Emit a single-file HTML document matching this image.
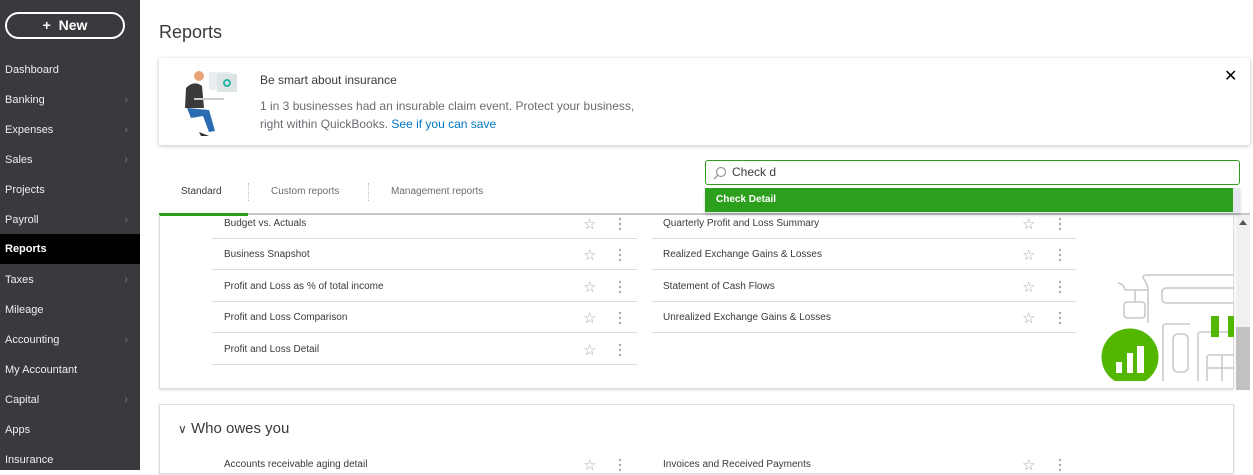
<!DOCTYPE html><html><head><style>
*{box-sizing:border-box;margin:0;padding:0}
body{width:1253px;height:470px;overflow:hidden;background:#fff;font-family:"Liberation Sans",sans-serif;position:relative}
.sb{position:absolute;left:0;top:0;width:140px;height:470px;background:#393a3d;color:#fff}
.new{position:absolute;left:5px;top:12px;width:120px;height:27px;border:2px solid #fff;border-radius:14px;font-size:14px;font-weight:bold;text-align:center;line-height:23px}
.nav{position:absolute;left:0;width:140px;height:30px;line-height:30px;font-size:11px;padding-left:5px;color:#eee}
.nav.a{background:#000;font-weight:bold;color:#fff}
.nav .c{position:absolute;right:12px;top:0;color:#777;font-size:11px}
.abs{position:absolute}
.t{font-size:10px;color:#393a3d}
.ln{position:absolute;height:1px;background:#dcdcdc}
</style></head><body>
<div class="sb">
<div class="new">+&nbsp; New</div>
<div class="nav" style="top:55px">Dashboard</div>
<div class="nav" style="top:85px">Banking<span class="c">›</span></div>
<div class="nav" style="top:115px">Expenses<span class="c">›</span></div>
<div class="nav" style="top:145px">Sales<span class="c">›</span></div>
<div class="nav" style="top:175px">Projects</div>
<div class="nav" style="top:205px">Payroll<span class="c">›</span></div>
<div class="nav a" style="top:234px">Reports</div>
<div class="nav" style="top:265px">Taxes<span class="c">›</span></div>
<div class="nav" style="top:295px">Mileage</div>
<div class="nav" style="top:325px">Accounting<span class="c">›</span></div>
<div class="nav" style="top:355px">My Accountant</div>
<div class="nav" style="top:385px">Capital<span class="c">›</span></div>
<div class="nav" style="top:415px">Apps</div>
<div class="nav" style="top:445px">Insurance</div>
</div>
<div class="abs" style="left:159px;top:22px;font-size:18px;color:#393a3d">Reports</div>
<div class="abs" style="left:159px;top:58px;width:1091px;height:87px;background:#fff;box-shadow:0 1px 4px rgba(0,0,0,.25);border-radius:2px">
<svg class="abs" style="left:10px;top:8px" width="70" height="72"><circle cx="30" cy="10" r="5" fill="#e8a57a"/><path d="M17 22 Q25 14 33 20 L35 42 L16 42 Z" fill="#3a3a3a"/><path d="M18 42 L40 44 L46 65 L40 66 L34 50 L22 52 Z" fill="#2b6cb0"/><rect x="40" y="6" width="22" height="18" fill="#e9eef0"/><rect x="48" y="8" width="20" height="18" fill="#dde4e6"/><circle cx="58" cy="17" r="3" fill="none" stroke="#2bb5a8" stroke-width="2"/><rect x="25" y="32" width="30" height="2" fill="#ccc"/><path d="M30 66 L40 70 L32 70 Z" fill="#333"/></svg>
<div class="abs" style="left:101px;top:15px;font-size:12px;color:#393a3d">Be smart about insurance</div>
<div class="abs" style="left:101px;top:39px;font-size:12px;color:#6b6c72;line-height:18px">1 in 3 businesses had an insurable claim event. Protect your business,<br>right within QuickBooks. <span style="color:#0077c5">See if you can save</span></div>
<div class="abs" style="left:1065px;top:8px;font-size:16px;color:#000">✕</div>
</div>
<div class="abs t" style="left:181px;top:186px;color:#393a3d">Standard</div>
<div class="abs" style="left:248px;top:183px;height:18px;border-left:1px dotted #bbb"></div>
<div class="abs t" style="left:271px;top:186px;color:#6b6c72">Custom reports</div>
<div class="abs" style="left:368px;top:183px;height:18px;border-left:1px dotted #bbb"></div>
<div class="abs t" style="left:391px;top:186px;color:#6b6c72">Management reports</div>
<div class="abs" style="left:159px;top:213px;width:1091px;height:2px;background:#c8c8c8"></div>
<div class="abs" style="left:159px;top:213px;width:89px;height:3px;background:#2ca01c"></div>
<div class="abs" style="left:159px;top:215px;width:1075px;height:174px;border:1px solid #ddd;border-top:none;box-shadow:0 1px 2px rgba(0,0,0,.15)"></div>
<div class="abs" style="left:1236px;top:215px;width:14px;height:175px;background:#f0f0f0"><div style="position:absolute;left:0;top:112px;width:14px;height:63px;background:#c1c1c1"></div><div style="position:absolute;left:3px;top:5px;border:4px solid transparent;border-bottom:5px solid #555;border-top:none"></div></div>
<svg class="abs" style="left:1080px;top:260px" width="154" height="121"><g fill="none" stroke="#c8c9cc" stroke-width="1.6"><path d="M154 15 L66 15 Q63 15 63 18 Q68 24 68 30 L68 63"/><path d="M38 23 Q44 24 45 30 L68 30"/><rect x="44" y="42" width="21" height="16" rx="3"/><path d="M55 30 L55 42"/><rect x="82" y="28" width="80" height="15" rx="4"/><path d="M83 121 L83 67 Q83 64 86 64 L110 64"/><rect x="93" y="74" width="15" height="38" rx="5"/><path d="M118 121 L118 75 Q118 72 121 72 L154 72 M127 121 L127 98 Q127 95 130 95 L154 95 M127 108 L154 108 M142 95 L142 121"/></g><rect x="131" y="56" width="8" height="21" fill="#53b700"/><rect x="148" y="56" width="6" height="21" fill="#53b700"/><circle cx="50" cy="97" r="28.5" fill="#53b700"/><rect x="36" y="102" width="6" height="11" fill="#fff"/><rect x="47" y="93" width="6" height="20" fill="#fff"/><rect x="57" y="86" width="7" height="27" fill="#fff"/></svg>
<div id="rows"></div>
<div class="abs" style="left:705px;top:160px;width:535px;height:25px;border:1px solid #2ca01c;border-radius:3px;background:#fff"><svg class="abs" style="left:7px;top:5px" width="14" height="14"><circle cx="8" cy="6" r="4.5" fill="none" stroke="#999" stroke-width="1.2"/><path d="M5 9 L1 13" stroke="#999" stroke-width="1.3"/></svg><span class="abs" style="left:26px;top:4px;font-size:12px;color:#393a3d">Check d</span></div>
<div class="abs" style="left:705px;top:188px;width:535px;height:25px;background:#e4e7ee;box-shadow:0 2px 3px rgba(0,0,0,.2)"><div style="width:528px;height:24px;background:#2ca01c;color:#fff;font-size:10px;font-weight:bold;padding:6px 0 0 11px">Check Detail</div></div>
<div class="abs" style="left:159px;top:404px;width:1075px;height:70px;border:1px solid #ddd;box-shadow:0 1px 2px rgba(0,0,0,.15)"></div>
<div class="abs" style="left:178px;top:420px;font-size:15px;color:#393a3d"><span style="font-size:12px">∨</span> Who owes you</div>
<script>
var L=[["Budget vs. Actuals","Quarterly Profit and Loss Summary",224],["Business Snapshot","Realized Exchange Gains & Losses",255],["Profit and Loss as % of total income","Statement of Cash Flows",287],["Profit and Loss Comparison","Unrealized Exchange Gains & Losses",318],["Profit and Loss Detail","",350],["Accounts receivable aging detail","Invoices and Received Payments",465]];
function dots(x,y){return '<svg class="abs" style="left:'+x+'px;top:'+(y-7)+'px" width="4" height="14"><circle cx="2" cy="2" r="1.2" fill="#aaa"/><circle cx="2" cy="7" r="1.2" fill="#aaa"/><circle cx="2" cy="12" r="1.2" fill="#aaa"/></svg>';}
var h="";L.forEach(function(r,i){var y=r[2];
h+='<div class="abs t" style="left:224px;top:'+(y-6)+'px">'+r[0]+'</div><div class="abs" style="left:583px;top:'+(y-9)+'px;font-size:15px;color:#aaa">☆</div>'+dots(618,y);
if(i<5)h+='<div class="ln" style="left:212px;top:'+(y+14)+'px;width:425px"></div>';
if(r[1]){h+='<div class="abs t" style="left:663px;top:'+(y-6)+'px">'+r[1]+'</div><div class="abs" style="left:1022px;top:'+(y-9)+'px;font-size:15px;color:#aaa">☆</div>'+dots(1058,y);
if(i<4)h+='<div class="ln" style="left:652px;top:'+(y+14)+'px;width:424px"></div>';}});
document.getElementById("rows").innerHTML=h;
</script>
</body></html>
